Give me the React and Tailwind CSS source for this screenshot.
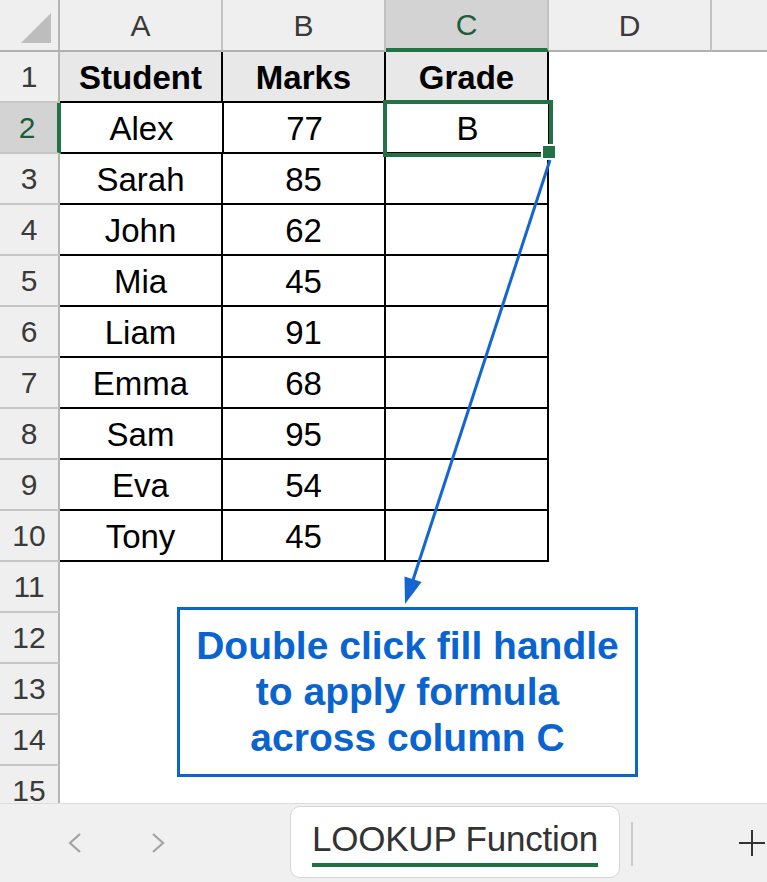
import React from "react";

const rows = [
  ["Student", "Marks", "Grade"],
  ["Alex", "77", "B"],
  ["Sarah", "85", ""],
  ["John", "62", ""],
  ["Mia", "45", ""],
  ["Liam", "91", ""],
  ["Emma", "68", ""],
  ["Sam", "95", ""],
  ["Eva", "54", ""],
  ["Tony", "45", ""],
];

const cols = ["A", "B", "C", "D"];

function ColHeader({ label }) {
  const sel = label === "C";
  if (sel) {
    return (
      <div className="w-[163px] shrink-0 h-full bg-[#d3d3d3] border-r-2 border-r-[#c2c2c2] border-b-4 border-b-[#217346] flex items-center justify-center text-[30px] text-[#1f5c3c]">
        {label}
      </div>
    );
  }
  return (
    <div className="w-[163px] shrink-0 h-full bg-[#efefef] border-r-2 border-r-[#c2c2c2] border-b-2 border-b-[#b0b0b0] flex items-center justify-center text-[30px] text-[#3a3a3a]">
      {label}
    </div>
  );
}

function RowHeader({ n }) {
  if (n === 2) {
    return (
      <div className="w-[61px] shrink-0 h-full bg-[#d3d3d3] border-r-4 border-r-[#217346] border-b-2 border-b-[#c6c6c6] flex items-center justify-center pr-[3px] text-[30px] text-[#1f5c3c]">
        {n}
      </div>
    );
  }
  return (
    <div className="w-[60px] shrink-0 h-full bg-[#efefef] border-r-2 border-r-[#b5b5b5] border-b-2 border-b-[#c6c6c6] flex items-center justify-center text-[30px] text-[#3a3a3a]">
      {n}
    </div>
  );
}

function DataRow({ n, data }) {
  const header = n === 1;
  return (
    <div className="flex h-[51px] shrink-0">
      <RowHeader n={n} />
      {data.map((v, i) => (
        <div
          key={i}
          className={
            header
              ? "w-[163px] shrink-0 h-full border-r-2 border-b-2 border-black bg-[#e8e8e8] flex items-center justify-center pt-[2px] text-[33px] font-bold text-black"
              : "w-[163px] shrink-0 h-full border-r-2 border-b-2 border-black bg-white flex items-center justify-center pt-[2px] text-[33px] text-black"
          }
        >
          {v}
        </div>
      ))}
      <div className="flex-1" />
    </div>
  );
}

function EmptyRow({ n }) {
  return (
    <div className="flex h-[51px] shrink-0">
      <RowHeader n={n} />
      <div className="flex-1" />
    </div>
  );
}

export default function App() {
  return (
    <div
      className="w-[767px] h-[882px] overflow-hidden bg-white flex flex-col"
      style={{ fontFamily: '"Liberation Sans", Arial, sans-serif' }}
    >
      <div className="h-[803px] shrink-0 overflow-hidden relative">
        <div className="flex h-[52px]">
          <div className="w-[60px] shrink-0 h-full bg-[#efefef] border-r-2 border-r-[#b5b5b5] border-b-2 border-b-[#b0b0b0] flex items-end justify-end pr-[7px] pb-[7px]">
            <svg width="30" height="30" viewBox="0 0 30 30">
              <polygon points="30,0 30,30 0,30" fill="#bdbdbd" />
            </svg>
          </div>
          {cols.map((c) => (
            <ColHeader key={c} label={c} />
          ))}
          <div className="flex-1 h-full bg-[#efefef] border-b-2 border-b-[#b0b0b0]" />
        </div>
        {rows.map((r, i) => (
          <DataRow key={i} n={i + 1} data={r} />
        ))}
        {[11, 12, 13, 14, 15].map((n) => (
          <EmptyRow key={n} n={n} />
        ))}

        {/* selection border on C2 */}
        <div className="absolute left-[383px] top-[100px] w-[170px] h-[57px] border-4 border-[#217346] pointer-events-none" />
        {/* fill handle */}
        <div className="absolute left-[541px] top-[144px] w-[16px] h-[16px] bg-[#217346] border-2 border-white" />

        {/* arrow */}
        <svg
          className="absolute left-0 top-0 pointer-events-none"
          width="767"
          height="803"
          viewBox="0 0 767 803"
        >
          <line x1="550" y1="160" x2="413" y2="580" stroke="#1366d0" strokeWidth="3" />
          <polygon points="405,604 421.6,582.1 404.5,576.5" fill="#1366d0" />
        </svg>

        {/* callout */}
        <div className="absolute left-[177px] top-[607px] w-[461px] h-[170px] border-[3px] border-[#0a66cc] bg-white flex flex-col items-center justify-center text-[39px] font-bold leading-[46px] text-[#0a64d0]">
          <div>Double click fill handle</div>
          <div>to apply formula</div>
          <div>across column C</div>
        </div>
      </div>

      <div className="flex-1 bg-[#f0f0f0] border-t border-[#dddddd] flex items-start">
        <div className="mt-[27px] ml-[65px] w-[20px] h-[24px]">
          <svg width="20" height="24" viewBox="0 0 20 24">
            <polyline points="15,3 5,12 15,21" fill="none" stroke="#a3a3a3" strokeWidth="2.2" />
          </svg>
        </div>
        <div className="mt-[27px] ml-[63px] w-[20px] h-[24px]">
          <svg width="20" height="24" viewBox="0 0 20 24">
            <polyline points="5,3 15,12 5,21" fill="none" stroke="#a3a3a3" strokeWidth="2.2" />
          </svg>
        </div>
        <div className="ml-[122px] mt-[2px] w-[333px] h-[72px] bg-white rounded-[10px] border border-[#d6d6d6] flex justify-center">
          <div className="flex flex-col items-stretch pt-[12px]">
            <div className="text-[35px] leading-[40px] text-[#333333] tracking-[-0.2px]">LOOKUP Function</div>
            <div className="mt-[4px] h-[4px] bg-[#1e7145]" />
          </div>
        </div>
        <div className="ml-[11px] mt-[18px] w-[2px] h-[44px] bg-[#cccccc]" />
        <div className="ml-[104px] mt-[24px] w-[30px] h-[30px]">
          <svg width="30" height="30" viewBox="0 0 30 30">
            <line x1="15" y1="2" x2="15" y2="28" stroke="#333333" strokeWidth="2" />
            <line x1="2" y1="15" x2="28" y2="15" stroke="#333333" strokeWidth="2" />
          </svg>
        </div>
      </div>
    </div>
  );
}
